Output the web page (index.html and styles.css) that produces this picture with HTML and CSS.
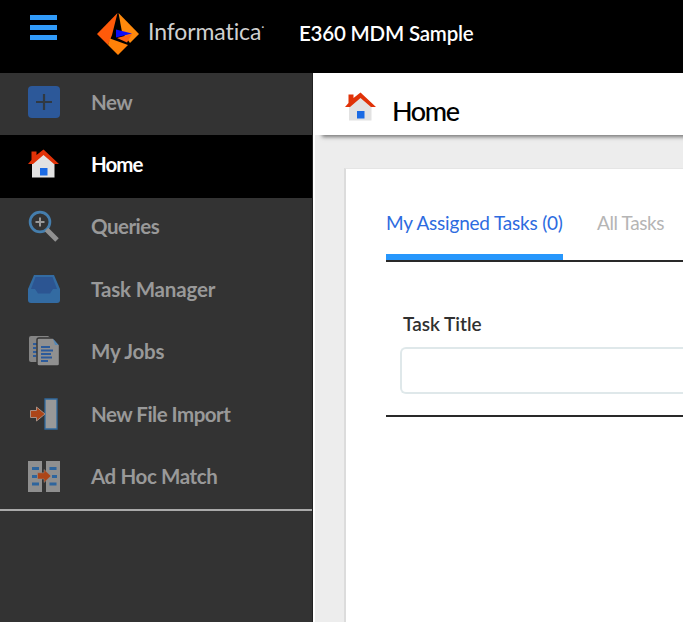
FILE: index.html
```html
<!DOCTYPE html>
<html lang="en">
<head>
<meta charset="utf-8">
<title>E360 MDM Sample</title>
<link rel="stylesheet" href="styles.css">
</head>
<body>
<header class="topbar">
  <button class="menu" aria-label="Menu"><i></i><i></i><i></i></button>
  <svg class="logo" width="42" height="42" viewBox="0 0 42 42">
    <path fill="#ff5a0a" d="M20.500 0 0 21l11 11 4-10z"/>
    <path fill="#ff8a0c" d="M21.500 0 42 21l-9 9-8-11z"/>
    <path fill="#ff6210" d="M20 25l15-4-5 8.500z"/>
    <path fill="#ff8208" d="M13 25.500 31 32 21 42 11 32z"/>
    <path fill="#0d0cf8" d="M19 16.500 35 20.500 19 24.500z"/>
  </svg>
  <span class="brand">Informatica<sup>·</sup></span>
  <span class="app">E360 MDM Sample</span>
</header>
<div class="body">
  <nav class="side">
    <a class="item"><svg width="32" height="32" viewBox="0 0 32 32"><rect width="32" height="32" rx="4" fill="#2c5899"/><path d="M16 8v16M8 16h16" stroke="#303943" stroke-width="2.200"/></svg><span class="t-new">New</span></a>
    <a class="item active"><svg width="32" height="32" viewBox="0 0 32 32"><path fill="#e2e2e2" d="M4 14 15.500 5 26.500 14v15.500H4z"/><path fill="#e03208" d="M0 16 3.500 12V3.500h5v3.500L15.500 1.500 31 16h-5L15.500 7 5 16z"/><path fill="#1a6ae4" d="M12 20h7.500v7.500H12z"/></svg><span class="t-home">Home</span></a>
    <a class="item"><svg width="32" height="32" viewBox="0 0 32 32"><circle cx="12" cy="12" r="9.900" fill="none" stroke="#457ead" stroke-width="2.700"/><path d="M12 7.500v9M7.500 12h9" stroke="#999" stroke-width="2"/><path d="M18.500 19.500 29 30" stroke="#919191" stroke-width="5"/></svg><span class="t-q">Queries</span></a>
    <a class="item"><svg width="32" height="32" viewBox="0 0 32 32"><path fill="#336ba2" d="M6 2h20l6 14v11q0 3-3 3H3q-3 0-3-3V16z"/><path fill="#2c5592" d="M7.500 4h17L29 16h-4l-3 4.500H10L7 16H3z"/></svg><span class="t-tm">Task Manager</span></a>
    <a class="item"><svg width="32" height="32" viewBox="0 0 32 32"><path fill="#858585" d="M3 1h17l4 3v23H3q-2 0-2-2V3q0-2 2-2z"/><path d="M5 9h4M5 13h3M5 17h4M5 21h3" stroke="#2c5b9b" stroke-width="2"/><path fill="#909090" stroke="#333" stroke-width="1.400" d="M11 3h14l6.500 7v19q0 2-2 2H11q-2 0-2-2V5q0-2 2-2z"/><path fill="#5488b7" d="M25 3.800 30.500 10H27z"/><path d="M13 12h9M13 15.500h12M13 19h10M13 22.500h11M13 26h7" stroke="#2c5b9b" stroke-width="2"/></svg><span class="t-mj">My Jobs</span></a>
    <a class="item"><svg width="32" height="32" viewBox="0 0 32 32"><path fill="#999" stroke="#306a9f" stroke-width="1.300" d="M17 1h12v30H17z"/><path fill="#ad4518" stroke="#a98f83" stroke-width="1" d="M2.500 12.500h6V9l8.500 7-8.500 7v-3.500h-6z"/></svg><span class="t-fi">New File Import</span></a>
    <a class="item"><svg width="32" height="32" viewBox="0 0 32 32"><path fill="#8f8f8f" d="M0 1h14v31H0zM18 1h14v31H18z"/><path d="M4 8.500h7M4 16.500h5M4 24h7M21.500 8.500h7M24 16.500h5M21.500 24h7" stroke="#2e659d" stroke-width="3"/><path fill="#ad4518" stroke="#929292" stroke-width=".5" d="M9.500 12.800h6.500V9.500l7 6.500-7 6.500V19H9.500z"/></svg><span class="t-ah">Ad Hoc Match</span></a>
  </nav>
  <main class="main">
    <div class="title"><svg width="32" height="32" viewBox="0 0 32 32"><path fill="#e2e2e2" d="M4 14 15.500 5 26.500 14v15.500H4z"/><path fill="#e03208" d="M0 16 3.500 12V3.500h5v3.500L15.500 1.500 31 16h-5L15.500 7 5 16z"/><path fill="#1a6ae4" d="M12 20h7.500v7.500H12z"/></svg><h1>Home</h1></div>
    <section class="card">
      <div class="tabs"><a class="tab on"><span>My Assigned Tasks (0)</span></a><a class="tab"><span>All Tasks</span></a></div>
      <div class="filters">
        <label for="task">Task Title</label>
        <input id="task" type="text">
      </div>
    </section>
  </main>
</div>
</body>
</html>
```
FILE: styles.css
```css
* { box-sizing: border-box; }
body { margin: 0; height: 622px; overflow: hidden; font-family: Lato, "Liberation Sans", sans-serif; background: #ededed; display: flex; flex-direction: column; }
span, h1, label { white-space: nowrap; }
.topbar { height: 73px; flex: none; background: #000; color: #fff; display: flex; align-items: flex-start; }
.menu { margin: 15px 0 0 30px; padding: 0; border: 0; background: none; width: 27px; height: 25px; display: flex; flex-direction: column; justify-content: space-between; }
.menu i { height: 5px; background: #319bfa; }
.logo { margin: 13px 0 0 40px; flex: none; }
.brand { margin: 16px 0 0 9px; width: 151px; font-size: 23px; line-height: 30px; color: #d0d0d0; letter-spacing: -0.1px; }
.brand sup { font-size: 12px; line-height: 0; }
.app { margin-top: 18px; font-size: 20.5px; line-height: 30px; font-weight: 600; letter-spacing: -0.2px; }
.body { flex: 1; display: flex; min-height: 0; }
.side { width: 313px; flex: none; background: #333; border-right: 1px solid #222; }
.item { display: flex; align-items: center; height: 62.4px; padding-left: 28px; gap: 31px; color: #999; font-size: 20.5px; font-weight: 700; padding-bottom: 5px; }
.item svg { flex: none; }
.item.active { background: #000; color: #fff; }
.item:last-child { height: 63px; }
.t-new { letter-spacing: -0.5px; }
.t-home { letter-spacing: -1px; }
.t-q { letter-spacing: -0.5px; }
.t-tm { letter-spacing: -0.15px; }
.t-mj { letter-spacing: -0.2px; }
.t-fi { letter-spacing: -0.5px; }
.t-ah { letter-spacing: -0.4px; }
.side::after { content: ""; display: block; height: 2px; margin-top: -1px; background: #aaa; }
.main { flex: 1; min-width: 0; border-left: 2px solid #fff; display: flex; flex-direction: column; overflow: hidden; }
.title { height: 62px; flex: none; background: #fff; display: flex; padding: 18px 0 0 30px; gap: 16px; box-shadow: 7px 2px 4px rgba(0,0,0,.5); }
h1 { margin: 3px 0 0 -1px; font-size: 27px; line-height: 34px; font-weight: 500; letter-spacing: -1.4px; color: #000; }
.card { flex: 1; margin: 33px 0 0 29px; background: #fff; border-top: 1px solid #e5e5e5; border-left: 2px solid #dcdcdc; padding-left: 40px; }
.tabs { display: flex; gap: 34px; height: 93px; border-bottom: 2px solid #292929; }
.tab { font-size: 19px; color: #b5b5b5; padding-top: 42px; line-height: 24px; letter-spacing: -0.4px; }
.tab.on { width: 177px; color: #2d6be0; border-bottom: 6px solid #2797fc; letter-spacing: -0.2px; }
.filters { height: 155px; padding: 50px 0 0 14px; border-bottom: 2px solid #292929; }
label { display: block; margin-left: 3px; font-size: 19px; line-height: 24px; font-weight: 600; color: #303030; }
input { display: block; width: 100%; height: 47px; margin: 11px 0 0; border: 2px solid #dfe8ea; border-right: 0; border-radius: 6px 0 0 6px; background: #fff; }
```
